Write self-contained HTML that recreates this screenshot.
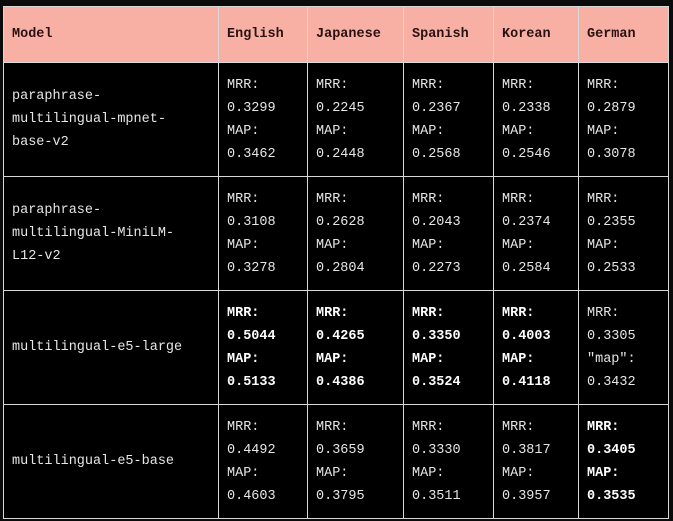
<!DOCTYPE html>
<html><head><style>
html,body{margin:0;padding:0;background:#0b0b0b;width:673px;height:521px;overflow:hidden}
table{position:absolute;left:3px;top:6px;border-collapse:collapse;table-layout:fixed;font-family:"Liberation Mono",monospace;font-size:13.5px;color:#e6e6e6}
td,th{border:1px solid #d8d8d8;padding:0 8px;text-align:left;vertical-align:middle;line-height:23px;background:#000}
th{background:#f8b0a5;color:#2a1212;font-weight:bold;height:55px}
tr.r td{height:113px}
b{color:#fff}
</style></head><body>
<table>
<colgroup><col style="width:215px"><col style="width:89px"><col style="width:96px"><col style="width:90px"><col style="width:85px"><col style="width:90px"></colgroup>
<tr><th>Model</th><th>English</th><th>Japanese</th><th>Spanish</th><th>Korean</th><th>German</th></tr>
<tr class="r"><td>paraphrase-<br>multilingual-mpnet-<br>base-v2</td><td>MRR:<br>0.3299<br>MAP:<br>0.3462</td><td>MRR:<br>0.2245<br>MAP:<br>0.2448</td><td>MRR:<br>0.2367<br>MAP:<br>0.2568</td><td>MRR:<br>0.2338<br>MAP:<br>0.2546</td><td>MRR:<br>0.2879<br>MAP:<br>0.3078</td></tr>
<tr class="r"><td>paraphrase-<br>multilingual-MiniLM-<br>L12-v2</td><td>MRR:<br>0.3108<br>MAP:<br>0.3278</td><td>MRR:<br>0.2628<br>MAP:<br>0.2804</td><td>MRR:<br>0.2043<br>MAP:<br>0.2273</td><td>MRR:<br>0.2374<br>MAP:<br>0.2584</td><td>MRR:<br>0.2355<br>MAP:<br>0.2533</td></tr>
<tr class="r"><td>multilingual-e5-large</td><td><b>MRR:<br>0.5044<br>MAP:<br>0.5133</b></td><td><b>MRR:<br>0.4265<br>MAP:<br>0.4386</b></td><td><b>MRR:<br>0.3350<br>MAP:<br>0.3524</b></td><td><b>MRR:<br>0.4003<br>MAP:<br>0.4118</b></td><td>MRR:<br>0.3305<br>"map":<br>0.3432</td></tr>
<tr class="r"><td>multilingual-e5-base</td><td>MRR:<br>0.4492<br>MAP:<br>0.4603</td><td>MRR:<br>0.3659<br>MAP:<br>0.3795</td><td>MRR:<br>0.3330<br>MAP:<br>0.3511</td><td>MRR:<br>0.3817<br>MAP:<br>0.3957</td><td><b>MRR:<br>0.3405<br>MAP:<br>0.3535</b></td></tr>
</table>
</body></html>
